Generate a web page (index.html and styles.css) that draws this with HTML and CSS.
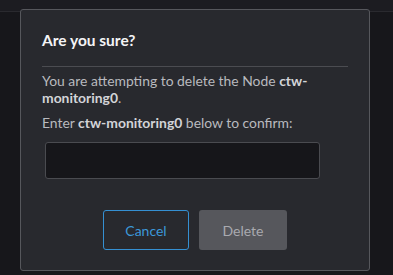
FILE: index.html
```html
<!DOCTYPE html>
<html>
    <head>
        <title>Delete Node</title>
        <meta charset="UTF-8">
        <meta name="viewport" content="width=device-width, initial-scale=1.0">
        <link rel="stylesheet" href="styles.css">
    </head>
    <body>
        <div class="topbar"></div>
        <div class="page"></div>

        <div class="modal">
            <h2 class="modal-title">Are you sure?</h2>
            <hr class="modal-rule">
            <p class="modal-text">You are attempting to delete the Node <b>ctw-</b><b>monitoring0</b>.</p>
            <p class="modal-text confirm">Enter <b>ctw-monitoring0</b> below to confirm:</p>
            <input class="confirm-input" type="text">
            <div class="actions">
                <button class="btn btnCancel">Cancel</button>
                <button class="btn btnDelete" disabled>Delete</button>
            </div>
        </div>
    </body>
</html>
```

FILE: styles.css
```css
body{
    margin: 0;
    background: #17171b;
    font-family: Lato, "Open Sans", sans-serif;
}
.topbar{
    height: 11px;
    background: #1c1c21;
    border-bottom: 1px solid #2a2a2f;
}
.page{
    height: 263px;
}
.modal{
    position: fixed;
    top: 9px;
    left: 20px;
    width: 350px;
    box-sizing: border-box;
    padding: 21px 21px 20px;
    background: #28292e;
    border: 1px solid #56575c;
    border-radius: 3px;
}
.modal-title{
    margin: 0 0 17px;
    font-size: 15.5px;
    line-height: 18px;
    font-weight: 700;
    color: #f4f4f6;
}
.modal-rule{
    margin: 0 0 5px;
    border: 0;
    border-top: 1px solid #4b4c51;
}
.modal-text{
    margin: 0 0 8px;
    font-size: 13.9px;
    line-height: 17px;
    color: #b9babf;
}
.modal-text b{
    color: #d3d4d8;
}
.modal-text.confirm{
    margin-bottom: 0;
}
.confirm-input{
    display: block;
    width: 275px;
    height: 37px;
    box-sizing: border-box;
    margin: 11px 0 0 3px;
    background: #16161a;
    border: 1px solid #4a4b50;
    border-radius: 3px;
    color: #ddd;
    outline: none;
}
.actions{
    display: flex;
    justify-content: center;
    gap: 10px;
    margin-top: 31px;
}
.btn{
    height: 40px;
    border-radius: 3px;
    font-family: Lato, "Open Sans", sans-serif;
    font-size: 14px;
}
.btnCancel{
    width: 86px;
    background: transparent;
    border: 1px solid #3590d3;
    color: #3c98d9;
}
.btnDelete{
    width: 88px;
    background: #56575c;
    border: none;
    color: #a9aaaf;
}
```
